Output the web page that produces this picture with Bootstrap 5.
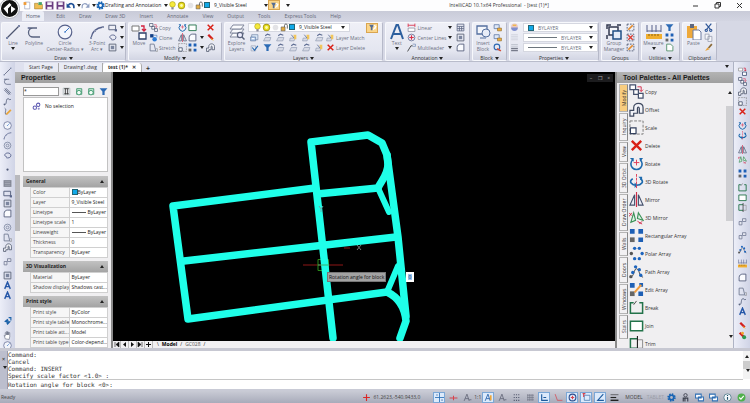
<!DOCTYPE html>
<html lang="en">
<head>
<meta charset="utf-8">
<meta name="viewport" content="width=device-width, initial-scale=1">
<title>IntelliCAD 10.1x64 Professional - [test (1)*]</title>
<link href="https://cdn.jsdelivr.net/npm/bootstrap@5.3.0/dist/css/bootstrap.min.css" rel="stylesheet">
<style>
:root{--ui:"Open Sans","Noto Sans",sans-serif;--ink:#222;--dim:#6d7182;}
body{font:5px/6px var(--ui);color:var(--ink);background:#dfe1ec;overflow:hidden}
button,select,input{font:inherit;color:inherit;border:0;background:none;padding:0;margin:0;line-height:inherit}
button{display:inline-flex;align-items:center;justify-content:center;white-space:nowrap}
select{appearance:none;min-width:0;flex:1;outline:0}
svg{display:block;flex:none}
.g{width:9px;height:9px}
.g-lg{width:16px;height:16px}
.items .g-lg{width:15px;height:15px}
.caret::after{content:"";border:2px solid transparent;border-top:3px solid #222;border-bottom:0;margin-left:2px;flex:none}

.titlebar{height:11px;background:#fdfdfe;padding-left:22px}
.caption{color:#333}
.qb{width:11px}
.winbtns button{width:22px}
.applogo{position:absolute;left:-1px;top:-2px;width:21px;height:21px;z-index:3}
.hot{background:#fbd588;border:1px solid #d9a550;width:12px;height:10px}
.swatch{width:6px;height:6px;background:#12a9e8;border:1px solid #267;flex:none}

.ribbon-tabs{height:10px;background:linear-gradient(#c9cbd8,#d3d5e2);padding-left:22px}
.ribbon-tabs a{color:#646878;text-decoration:none;padding:1px 7px 0;line-height:9px}
.ribbon-tabs a.active{background:#eceef6;color:#555a70;border-radius:2px 2px 0 0;padding:1px 4px 0;margin-right:5px}

.ribbon{height:41px;background:#d6d8e5;padding:1px 1px 0;border-bottom:1px solid #b9bccb}
.panel{background:linear-gradient(#eff0f7,#e4e6f0 75%,#d2d5e3);border:1px solid #f7f8fc;border-right-color:#b6b9c9;border-radius:2px;margin-right:2px;color:var(--dim)}
.panel .body-area{height:31px}
.panel h2{font:5px/8px var(--ui);text-align:center;color:#333;margin:0}
.panel h2.drop::after{content:"";display:inline-block;border:2px solid transparent;border-top:3px solid #222;border-bottom:0;margin-left:2px}
.bigbtn{flex-direction:column;justify-content:flex-start;height:31px;padding-top:1px;line-height:6px;white-space:normal;color:var(--dim)}
.bigbtn .caret{display:flex;height:3px;margin-top:1px}
.bigbtn .caret::after{margin-left:0}
.stack{display:grid;grid-auto-rows:10px;align-items:center}
.stack button{justify-content:flex-start;height:10px;gap:1px}
.field{background:#fff;border:1px solid #d5d7e0;height:9px}

.docs{height:10px;background:#dfe1ee;padding-left:9px;color:#333}
.docs a{color:#333;text-decoration:none;padding:0 5px;line-height:9px;border-right:1px solid #aaa;background:#e9ebf4}
.docs a.active{background:#fff;font-weight:700;border-radius:3px 3px 0 0}
.docs .newtab{font-size:7px;font-weight:700}
.toolcol{display:flex;flex-direction:column;background:linear-gradient(90deg,#eceef8,#d0d4e6);flex:none;overflow:hidden}
.toolcol button{height:10px;width:100%;flex:none}
.toolcol .sep{margin-top:4px}
.toolcol .sep2{margin-top:16px}
.toolcol-l{width:15px;padding-top:5px}
.toolcol-r{width:17px;padding-top:5px;border-left:1px solid #aeb3c4}

.dockhead{background:linear-gradient(#b4b4b4,#9f9f9f);height:11px;padding-left:6px;font:bold 7px/11px "Liberation Sans",Arial,sans-serif;color:#1c1c1c;white-space:nowrap}
.dock{background:#f0eff1;flex:none}
.props{width:98px;border-right:2px solid #8b8b8b}
.props-body{flex:1;min-width:0;padding:4px 3px 0}
.props-rail{width:5px;flex:none;padding-top:92px}
.props-rail .thumb{display:block;height:56px}
.findbox{width:36px;border-color:#999}
.tree{background:#fff;border:1px solid #c2c2c2;height:75px;margin-top:1px}
.thumb{background:#b9b9bd}
.gridhead{background:linear-gradient(#c2c2c2,#a4a4a4);height:11px;padding:0 4px 0 3px;font:bold 5px/11px var(--ui);width:100%;justify-content:space-between}
.gridhead:not(:first-child){margin-top:3px}
.up{border:2px solid transparent;border-bottom:3px solid #222;border-top:0}
.pgrid{width:calc(100% - 7px);margin-left:7px;table-layout:fixed;border-collapse:collapse;background:#fff}
.pgrid th,.pgrid td{height:10px;border:1px solid #d0d0d0;padding:0 1px 0 2px;line-height:7px;font-weight:400;white-space:nowrap;overflow:hidden}
.pgrid th{background:#f6f6f6;color:#444}
.dash{display:inline-block;width:14px;border-top:1px solid #555;vertical-align:middle;margin-right:2px}

.view{background:#000;overflow:hidden}
.view>svg.scene{position:absolute;left:0;top:0}
.mdi{background:#1c1c1e;color:#aaa;position:absolute;right:2px;top:2px;width:26px;height:8px}
.prompt-tip{position:absolute;left:214px;top:200px;height:10px;background:#a2a2a2;border:1px solid #777;color:#111;line-height:8px;padding:0 1px;white-space:nowrap}
.prompt-val{position:absolute;left:293px;top:200px;width:8px;height:10px;background:#9cc5ee;border:2px solid #fff;color:#036;text-align:center}
.layouts{height:7px;background:#f1f0f2}
.layouts button{width:8px;height:7px;border-right:1px solid #bbb}
.layouts a{color:#555;text-decoration:none;line-height:7px;padding:0 3px}
.layouts a.active{color:#000;font-weight:700}

.palettes{width:118px;border-left:2px solid #8b8b8b}
.vtabs{width:9px;padding-top:1px;margin-left:2px}
.vtabs button{writing-mode:vertical-rl;transform:rotate(180deg);width:9px;border:1px solid #b5b5b5;border-left-color:#888;background:#f2f1f3;color:#333;margin-bottom:1px}
.vtabs button.active{background:#f8cd7f}
.items button{height:18px;justify-content:flex-start;padding-left:1px;gap:1px;color:#333;flex:none}
.sbar{width:7px}
.palettes .thumb{height:115px;background:#cfcfd2}

.command{background:#fff;border-top:3px solid #c7c8d2;border-bottom:2px solid #c9cbd6;font:6px/7px "DejaVu Sans Mono","Liberation Mono",monospace;color:#333}
.command .grip{width:8px;background:#bcbecd;border-right:1px solid #989bab}
.command pre{font:inherit;margin:0;height:28px;overflow:hidden}
.command input{height:10px;border-top:1px solid #c6c6c6;width:100%;outline:0}
.command .sbar{height:28px;background:#f3f3f3}
.command .thumb{height:8px;background:#cdcdcd}
.status{height:12px;background:linear-gradient(#c9cbd5,#a8abba);color:#444;padding:0 2px 0 1px}
.status button{width:14px;height:12px}
.status .on{background:#dceafb;border:1px solid #7ba7d6;height:11px;width:12px;margin:0 1px}
</style>
<script src="https://cdn.jsdelivr.net/npm/bootstrap@5.3.0/dist/js/bootstrap.bundle.min.js"></script>
</head>
<body class="vh-100 d-flex flex-column position-relative">
<svg class="d-none" aria-hidden="true"><defs>
<symbol id="line" viewBox="0 0 16 16"><path d="M2 14 14 2" stroke="#4d5570" stroke-width="1.3"/><path d="M1 13h2v2H1zM13 1h2v2h-2z" fill="#7b86a8"/></symbol>
<symbol id="pline" viewBox="0 0 16 16"><path d="M14 13H7a4.500 4.500 0 0 1 0-9L2 4M7 4h4" fill="none" stroke="#5a6480" stroke-width="1.3"/><circle cx="2.500" cy="4" r="1" fill="#7b86a8"/></symbol>
<symbol id="circ" viewBox="0 0 16 16"><circle cx="8" cy="8" r="6.800" fill="#f3f5fb" stroke="#56618a" stroke-width="1.200"/><path d="M8 8l4-4M7 8h2" stroke="#3b78c8"/></symbol>
<symbol id="arc" viewBox="0 0 16 16"><path d="M2 14C3 8 7 4 14 3" fill="none" stroke="#56618a" stroke-width="1.300"/><path d="M1 13h2v2H1zM5 6h2v2H5zM13 2h2v2h-2z" fill="#8a93b0"/></symbol>
<symbol id="rect" viewBox="0 0 16 16"><path d="M1.500 4h12v8h-12z" fill="none" stroke="#4f5a78" stroke-width="1.600"/><path d="M12 11h4v4h-4z" fill="#59658a"/></symbol>
<symbol id="rev" viewBox="0 0 16 16"><path d="M3 8c0-6 11-6 11 0 0 4-5 5-8 4M3 8l4 3" fill="none" stroke="#56618a" stroke-width="1.600"/></symbol>
<symbol id="hatch" viewBox="0 0 16 16"><path d="M1 2h14v12H1z" fill="#818593"/><path d="M3 5h10M3 8h10M3 11h10" stroke="#b9bdc9"/></symbol>
<symbol id="boxed" viewBox="0 0 16 16"><path d="M2 2h12v12H2z" fill="none" stroke="#5d6578" stroke-width="1.600"/><path d="M5 5h6v6H5z" fill="#7c869f"/></symbol>
<symbol id="move" viewBox="0 0 16 16"><path d="M1 2h7v5H1z" fill="#fff" stroke="#777" /><path d="M8 9h7v6H8z" fill="#fff" stroke="#2d3f68" stroke-width="1.300"/><path d="M10 2h3v5M11 5l2 2 2-2" fill="none" stroke="#d21f3c" stroke-width="1.300"/></symbol>
<symbol id="copy" viewBox="0 0 16 16"><path d="M1 1h6v5H1zM5 6h5v5H5zM10 10h5v5h-5z" fill="#fff" stroke="#44506c" stroke-width="1.300"/><path d="M9 3h4v5M11 6l2 2 2-2" fill="none" stroke="#d5304c"/></symbol>
<symbol id="clone" viewBox="0 0 16 16"><path d="M2 2h6v6H2z" fill="#123f86"/><circle cx="10" cy="11" r="4" fill="#2b7bd6"/><path d="M8 4h6v4" fill="none" stroke="#2b66ad"/></symbol>
<symbol id="stretch" viewBox="0 0 16 16"><path d="M2 2h7l3 12H2z" fill="none" stroke="#66708a" stroke-width="1.400"/><path d="M12 10h3v5h-3" fill="none" stroke="#888"/></symbol>
<symbol id="rot" viewBox="0 0 16 16"><path d="M4 4a6 6 0 1 0 8 0" fill="none" stroke="#1c69ad" stroke-width="1.700"/><path d="M11 2h4l-3 4zM1 2h4v4z" fill="#1c69ad"/><path d="M8 4v6M5 7h6" stroke="#dd3b55"/></symbol>
<symbol id="rot3" viewBox="0 0 16 16"><path d="M4 5C-1 8 3 12 8 12s9-4 4-7" fill="none" stroke="#1c69ad" stroke-width="1.800"/><path d="M9 12l-3-3v6zM10 3h4v4z" fill="#1c69ad"/><path d="M8 0v16" stroke="#dd3b55" stroke-dasharray="3 1"/></symbol>
<symbol id="mirror" viewBox="0 0 16 16"><path d="M6 3v11H1zM10 3v11h5z" fill="#e8eaf3" stroke="#44506c" stroke-width="1.200"/><path d="M8 0v16" stroke="#cf2c49" stroke-width="1.200"/></symbol>
<symbol id="mir3" viewBox="0 0 16 16"><path d="M5 3 2 13l5-2zM10 3l5 8-6-2z" fill="#e3f2e7" stroke="#3a9157" stroke-width="1.200"/><path d="M0 3l3 3M11 15l3-3M0 7l3-4M9 12l5 3" stroke="#cf2c49"/></symbol>
<symbol id="scale" viewBox="0 0 16 16"><path d="M1 1h14v14H1z" fill="none" stroke="#777" stroke-dasharray="3 1.500"/><path d="M1.500 8.500h6v6h-6z" fill="#fff" stroke="#33405e" stroke-width="1.300"/></symbol>
<symbol id="offset" viewBox="0 0 16 16"><path d="M1 15V9h4V6c0-6 10-6 10 0v6H11V7c0-2-2-2-2 0v5H5v3z" fill="#f2f3f8" stroke="#3f4960" stroke-width="1.300"/></symbol>
<symbol id="del" viewBox="0 0 16 16"><path d="M3 3l10 10M13 3 3 13" stroke="#d92016" stroke-width="2.600"/></symbol>
<symbol id="array" viewBox="0 0 16 16"><path d="M1 1h5v5H1zM10 1h5v5h-5zM10 10h5v5h-5z" fill="#1d5fb5"/><path d="M1 10h5v5H1z" fill="#666"/></symbol>
<symbol id="polar" viewBox="0 0 16 16"><g fill="#1d64bd"><circle cx="6" cy="2.500" r="1.800"/><circle cx="11" cy="2.500" r="1.800"/><circle cx="14" cy="8" r="1.800"/><circle cx="11" cy="13.500" r="1.800"/><circle cx="6" cy="13.500" r="1.800"/></g><circle cx="2.500" cy="8" r="1.800" fill="#555"/></symbol>
<symbol id="patha" viewBox="0 0 16 16"><path d="M1 14c5 0 4-9 7-9s3 9 7 9" fill="none" stroke="#444"/><g fill="#1d64bd"><circle cx="4" cy="9" r="1.800"/><circle cx="7" cy="3" r="1.800"/><circle cx="11" cy="6" r="1.800"/><circle cx="12.500" cy="12" r="1.800"/></g><circle cx="2" cy="13.500" r="1.800" fill="#555"/></symbol>
<symbol id="edita" viewBox="0 0 16 16"><path d="M1 1h5v5H1zM11 1h4v4h-4zM10 10h5v5h-5z" fill="#1d5fb5"/><path d="M1 10h5v5H1z" fill="#666"/><path d="M6 11l7-8" stroke="#f09b3c" stroke-width="2.200"/></symbol>
<symbol id="break" viewBox="0 0 16 16"><path d="M5 3H1.500v11h13V3H11" fill="none" stroke="#22734a" stroke-width="1.600"/><path d="M5 5l3-4" stroke="#444"/></symbol>
<symbol id="join" viewBox="0 0 16 16"><path d="M1.500 3.500h13v10h-13z" fill="#fff" stroke="#22734a" stroke-width="1.600"/></symbol>
<symbol id="trim" viewBox="0 0 16 16"><path d="M9 3H1.500v10H9" fill="none" stroke="#22734a" stroke-width="1.600"/><path d="M9 4h5.500v9H9" fill="none" stroke="#888"/><path d="M9 0v16" stroke="#222" stroke-width="1.200"/></symbol>
<symbol id="chamf" viewBox="0 0 16 16"><path d="M2 14V8c0-4 3-6 6-6h6v12z" fill="#fafbfe" stroke="#4c5775" stroke-width="1.500"/></symbol>
<symbol id="brush" viewBox="0 0 16 16"><path d="M4 3l8 8" stroke="#d31f1f" stroke-width="4"/><path d="M10 9l4 5-5-3z" fill="#f0b32c"/></symbol>
<symbol id="brush2" viewBox="0 0 16 16"><path d="M3 3l7 7" stroke="#d31f1f" stroke-width="4"/><circle cx="11" cy="11" r="3.500" fill="#2c9a52"/><circle cx="8" cy="4" r="2.500" fill="#f0a52c"/></symbol>
<symbol id="cubes" viewBox="0 0 16 16"><path d="M2 8h5v6H2zM8 3h6v5H8z" fill="#e4e6ef" stroke="#68718c" stroke-width="1.300"/></symbol>
<symbol id="layers" viewBox="0 0 16 16"><g fill="#fafbfd" stroke="#80879c"><path d="M4 9h11l-3 4H1z"/><path d="M4 5h11l-3 4H1z"/><path d="M4 1h11l-3 4H1z"/></g><circle cx="11" cy="11" r="2.600" fill="#eef" stroke="#5a637c" stroke-width="1.200"/><path d="M13 13l2.500 2.500" stroke="#5a637c" stroke-width="1.500"/></symbol>
<symbol id="lay1" viewBox="0 0 16 16"><path d="M3 3h11v9H3z" fill="#dbe8f8" stroke="#5a7096"/><path d="M1 7h9v7H1z" fill="#a9c3e6" stroke="#5a7096"/><path d="M3 10h5" stroke="#fff" stroke-width="2"/></symbol>
<symbol id="lay2" viewBox="0 0 16 16"><path d="M4 8h10l-2 6H1z" fill="#d7dae5" stroke="#8490aa"/><path d="M4 5 8 2l5 2" fill="none" stroke="#5f6e93" stroke-width="2"/></symbol>
<symbol id="lay3" viewBox="0 0 16 16"><path d="M2 9h9l-2 5H1z" fill="#d7dae5" stroke="#8490aa"/><path d="M8 3h5v8H9z" fill="#f1c65c"/><path d="M4 3l5 6" stroke="#607099" stroke-width="1.500"/></symbol>
<symbol id="lay4" viewBox="0 0 16 16"><path d="M2 5h8v9H2z" fill="#e4e8f1" stroke="#8b94ab"/><path d="M4 8l4 5 6-8" fill="none" stroke="#2769b1" stroke-width="2"/></symbol>
<symbol id="bulb" viewBox="0 0 16 16"><circle cx="8" cy="6" r="5" fill="#f5e93c" stroke="#a79a1b"/><path d="M6 11h4v4H6z" fill="#889"/></symbol>
<symbol id="sun" viewBox="0 0 16 16"><circle cx="8" cy="8" r="6.500" fill="#a79a1b"/><circle cx="8" cy="8" r="5" fill="#e6dc1c"/><circle cx="8" cy="8" r="2.500" fill="#fffbb0"/></symbol>
<symbol id="snow" viewBox="0 0 16 16"><circle cx="8" cy="8" r="5" fill="#e3e3e6"/></symbol>
<symbol id="lock" viewBox="0 0 16 16"><path d="M2 7h7v7H2z" fill="#e3ad42" stroke="#555"/><path d="M8 7V4c0-3 5-3 5 0v6" fill="none" stroke="#555" stroke-width="1.500"/></symbol>
<symbol id="lyrhot" viewBox="0 0 16 16"><path d="M2 3h9l-3 5v5H5V8z" fill="#566d94"/><path d="M9 12l5-6M10 4l4 2-2 5" fill="none" stroke="#fff" stroke-width="2"/></symbol>
<symbol id="text" viewBox="0 0 16 16"><path d="M2 15 7.500 1h1.500l5 14M4.500 10h7" fill="none" stroke="#2c5f9e" stroke-width="2"/></symbol>
<symbol id="atext" viewBox="0 0 16 16"><path d="M3 14 8 2l5 12M5 10h6" fill="none" stroke="#2557a8" stroke-width="2.500"/></symbol>
<symbol id="linear" viewBox="0 0 16 16"><path d="M2 9h12v6H2z" fill="#fff" stroke="#667"/><path d="M2 1v6M14 1v6M2 4h12" stroke="#d8304a" stroke-width="1.500"/></symbol>
<symbol id="center" viewBox="0 0 16 16"><circle cx="8" cy="8" r="6" fill="none" stroke="#56618a" stroke-width="1.300"/><path d="M8 4v8M4 8h8" stroke="#d8304a" stroke-width="2"/></symbol>
<symbol id="leader" viewBox="0 0 16 16"><path d="M1 15 7 5h3" fill="none" stroke="#333" stroke-width="1.500"/><path d="M10 2h5v4h-5" fill="none" stroke="#5876a8"/></symbol>
<symbol id="tbl" viewBox="0 0 16 16"><path d="M2 2h12v12H2zM2 6h12M6 6v8M10 6v8M2 10h12" fill="none" stroke="#5f6a86" stroke-width="1.500"/></symbol>
<symbol id="block" viewBox="0 0 16 16"><path d="M2 2h10v8H2z" fill="#f4f6fb" stroke="#5570a0" stroke-width="1.300"/><circle cx="11" cy="9" r="4" fill="#e8edf8" stroke="#5570a0"/><path d="M5 14h6" stroke="#5570a0"/></symbol>
<symbol id="blk2" viewBox="0 0 16 16"><path d="M2 3h9v7H2z" fill="#dfe8f8" stroke="#5570a0" stroke-width="1.300"/><path d="M8 9h7v5H8z" fill="#efb03e" stroke="#86642a"/></symbol>
<symbol id="blk3" viewBox="0 0 16 16"><circle cx="7" cy="7" r="5" fill="none" stroke="#2c66b0" stroke-width="2"/><path d="M7 10l7 4" stroke="#cf4e3a" stroke-width="3"/></symbol>
<symbol id="ball" viewBox="0 0 16 16"><circle cx="8" cy="7" r="6" fill="#e9c7c0"/><path d="M2 8h12a6 6 0 0 1-12 0" fill="#7f8fd0"/><path d="M5 4h6" stroke="#f2b632" stroke-width="2"/></symbol>
<symbol id="lines" viewBox="0 0 16 16"><path d="M2 3h12M2 7h12" stroke="#9a9eac"/><path d="M2 10h12M2 13.500h12" stroke="#777b8a" stroke-width="2"/></symbol>
<symbol id="lines0" viewBox="0 0 16 16"><path d="M2 3h12M2 6h12M2 9h12M2 12h12" stroke="#c2c4d0"/></symbol>
<symbol id="group" viewBox="0 0 16 16"><path d="M1 5V1h4M11 1h4M1 11v4" fill="none" stroke="#333a50" stroke-width="1.500"/><path d="M3 3h9v8H3z" fill="#f6f7fb" stroke="#333a50" stroke-width="1.500"/><path d="M7 7h8v8H7z" fill="#e5edf9" stroke="#1f4f85" stroke-width="1.500"/></symbol>
<symbol id="grp" viewBox="0 0 16 16"><path d="M2 2h12v12H2z" fill="none" stroke="#44506c" stroke-width="1.500" stroke-dasharray="3 2"/><path d="M4 12l8-8" stroke="#e58c2d" stroke-width="3"/></symbol>
<symbol id="grp2" viewBox="0 0 16 16"><path d="M2 2h12v12H2z" fill="none" stroke="#44506c" stroke-width="1.500" stroke-dasharray="3 2"/><path d="M4 4l8 8M12 4l-8 8" stroke="#db3b30" stroke-width="2.500"/></symbol>
<symbol id="measure" viewBox="0 0 16 16"><path d="M1 1v7M6 1v7M10 1v7M15 1v7M1 7h14" stroke="#56618a" fill="none"/><path d="M0 10h16v5H0z" fill="#f0ae2f"/><path d="M3 10v2M6 10v2M9 10v2M12 10v2" stroke="#8d6212"/></symbol>
<symbol id="filter" viewBox="0 0 16 16"><path d="M1 2h14l-5 6v6H6V8z" fill="#2d6bb5"/></symbol>
<symbol id="page" viewBox="0 0 16 16"><path d="M3 2h7l4 4v8H3z" fill="#fff" stroke="#498a63" stroke-width="1.500"/></symbol>
<symbol id="paste" viewBox="0 0 16 16"><path d="M1 2h10v12H1z" fill="#eea93b"/><path d="M4 0h4v4H4z" fill="#5e6880"/><path d="M7 6h6l2 2v8H7z" fill="#fff" stroke="#6d7ba0"/></symbol>
<symbol id="cut" viewBox="0 0 16 16"><path d="M3 1l8 10M13 1 5 11" stroke="#2b5496" stroke-width="2"/><circle cx="4" cy="13" r="2" fill="none" stroke="#2b5496" stroke-width="2"/><circle cx="12" cy="13" r="2" fill="none" stroke="#2b5496" stroke-width="2"/></symbol>
<symbol id="cpy" viewBox="0 0 16 16"><path d="M2 2h7v9H2zM7 6h7v9H7z" fill="#f5f6fa" stroke="#9097aa" stroke-width="1.300"/></symbol>
<symbol id="pbrush" viewBox="0 0 16 16"><path d="M2 14l4-6 4 3z" fill="#e9a33b"/><path d="M8 9l6-7" stroke="#8b6a38" stroke-width="3"/></symbol>
<symbol id="newf" viewBox="0 0 16 16"><path d="M3 2h9v12H3z" fill="#fff" stroke="#8591ac"/><path d="M1 2h5v5H1z" fill="#f09b34"/></symbol>
<symbol id="open" viewBox="0 0 16 16"><path d="M1 4h6l1 2h7v8H1z" fill="#efbe52" stroke="#a0792a"/><path d="M8 2h6v5H8z" fill="#45a46b"/></symbol>
<symbol id="save" viewBox="0 0 16 16"><path d="M1 1h14v14H1z" fill="#6a3d80"/><path d="M4 2h8v5H4zM4 10h8v5H4z" fill="#f3eef7"/></symbol>
<symbol id="undo" viewBox="0 0 16 16"><path d="M4 8c3-5 10-4 10 2v3" fill="none" stroke="#1d4f97" stroke-width="3"/><path d="M1 4v8h8z" fill="#1d4f97"/></symbol>
<symbol id="redo" viewBox="0 0 16 16"><path d="M12 8C9 3 2 4 2 10v3" fill="none" stroke="#8d9dc0" stroke-width="2"/><path d="M15 4v8H8z" fill="#8d9dc0"/></symbol>
<symbol id="gear" viewBox="0 0 16 16"><circle cx="8" cy="8" r="6" fill="none" stroke="#1764b4" stroke-width="3" stroke-dasharray="2.700 2"/><circle cx="8" cy="8" r="4" fill="none" stroke="#1764b4" stroke-width="3"/></symbol>
<symbol id="spl" viewBox="0 0 16 16"><path d="M2 14c6 0 2-11 7-11 3 0 2 4 5 1" fill="none" stroke="#5a6480" stroke-width="1.600"/><circle cx="2.500" cy="13" r="1.500" fill="#5a6480"/></symbol>
<symbol id="dline" viewBox="0 0 16 16"><path d="M2 5l9 9M5 2l9 9M3 3l10 10" stroke="#5a6480" stroke-width="1.500"/></symbol>
<symbol id="pencil" viewBox="0 0 16 16"><path d="M3 2c5 3-2 8 3 12" fill="none" stroke="#5a6480" stroke-width="1.500"/><path d="M6 13l8-8" stroke="#eaa53a" stroke-width="3"/></symbol>
<symbol id="dot" viewBox="0 0 16 16"><circle cx="8" cy="8" r="2" fill="#4c5775"/></symbol>
<symbol id="donut" viewBox="0 0 16 16"><circle cx="8" cy="8" r="6" fill="none" stroke="#7a849e" stroke-width="1.400"/><circle cx="8" cy="8" r="2.500" fill="none" stroke="#7a849e" stroke-width="1.400"/></symbol>
<symbol id="sync" viewBox="0 0 16 16"><path d="M2 8 8 3l2 3-3 4zM14 8l-6 6-2-3 4-4z" fill="#1b62a8"/><path d="M10 1h4v5" fill="none" stroke="#1b62a8" stroke-width="2"/></symbol>
<symbol id="hand" viewBox="0 0 16 16"><path d="M4 14 2 8l2 1V3h2v4-6h2v6-5h2v5-4h2v7l-1 5z" fill="#fff" stroke="#555e76"/></symbol>
<symbol id="sel" viewBox="0 0 16 16"><path d="M2 2h12v12H2z" fill="#e6e8ea" stroke="#9aa"/><path d="M4 3h8M6 3v10M10 3v10M4 12h8" stroke="#333" stroke-width="1.500"/></symbol>
<symbol id="selg" viewBox="0 0 16 16"><path d="M3 3h9v10H3z" fill="#cdeedd" stroke="#3a9167" stroke-width="1.500"/><circle cx="7" cy="10" r="4" fill="#f2fbf6" stroke="#2d8f61" stroke-width="1.500"/></symbol>
<symbol id="node" viewBox="0 0 16 16"><circle cx="5" cy="10" r="3" fill="none" stroke="#5a56b0" stroke-width="1.800"/><circle cx="11" cy="5" r="3" fill="none" stroke="#5a56b0" stroke-width="1.800"/><path d="M10 12h4M12 10v4" stroke="#5a56b0"/></symbol>
<symbol id="plus" viewBox="0 0 16 16"><path d="M8 2v12M2 8h12" stroke="#db2626" stroke-width="2"/></symbol>
<symbol id="grid" viewBox="0 0 16 16"><path d="M3 2v12M6 2v12M9 2v12M12 2v12M2 4h12M2 8h12M2 12h12" stroke="#6c7080"/></symbol>
<symbol id="snap" viewBox="0 0 16 16"><path d="M3 3h10M3 8h10M3 13h10" stroke="#555b70" stroke-width="2" stroke-dasharray="2 2"/></symbol>
<symbol id="cross" viewBox="0 0 16 16"><path d="M8 0v16M0 8h16" stroke="#2a6fb5" stroke-width="1.500"/><path d="M2 2h3v3H2zM11 11h3v3h-3z" fill="#8aa9cf"/></symbol>
<symbol id="rline" viewBox="0 0 16 16"><path d="M1 9h14M8 5v8" stroke="#d7434d" stroke-width="1.800"/></symbol>
<symbol id="gA" viewBox="0 0 16 16"><path d="M2 14 7 2l4 12M4 10h6M11 12h4" fill="none" stroke="#5f6475" stroke-width="1.400"/></symbol>
<symbol id="gAon" viewBox="0 0 16 16"><path d="M2 14 7 2l4 12M4 10h6" fill="none" stroke="#2c66b0" stroke-width="1.600"/><path d="M12 4v9" stroke="#eaa53a" stroke-width="3"/></symbol>
<symbol id="ortho" viewBox="0 0 16 16"><path d="M3 2v11h11M6 8h5" fill="none" stroke="#1e5a9c" stroke-width="2"/></symbol>
<symbol id="polarT" viewBox="0 0 16 16"><path d="M2 2l4 11h9" fill="none" stroke="#d7434d" stroke-width="1.300"/></symbol>
<symbol id="osnap" viewBox="0 0 16 16"><circle cx="8" cy="8" r="6" fill="none" stroke="#2c4d8c" stroke-width="2"/><path d="M8 5v6M5 8h6" stroke="#d7434d" stroke-width="2"/></symbol>
<symbol id="esnap" viewBox="0 0 16 16"><path d="M4 4h10v9H4z" fill="none" stroke="#5480b5" stroke-width="1.500"/><path d="M1 1h5M3 1v6" stroke="#d7434d" stroke-width="2"/></symbol>
<symbol id="ang" viewBox="0 0 16 16"><path d="M13 2 3 13h11" fill="none" stroke="#205c9e" stroke-width="2"/></symbol>
<symbol id="lwt" viewBox="0 0 16 16"><path d="M1 3h14" stroke="#222"/><path d="M1 8h10" stroke="#222" stroke-width="2"/><path d="M1 13h14" stroke="#222" stroke-width="2.500"/></symbol>
<symbol id="man" viewBox="0 0 16 16"><circle cx="8" cy="4" r="3" fill="none" stroke="#3b3f4c" stroke-width="1.500"/><path d="M4 15V9h8v6M7 9v6" fill="none" stroke="#3b3f4c" stroke-width="2"/></symbol>
<symbol id="wins" viewBox="0 0 16 16"><path d="M1 2h10v7H1zM6 7h9v7H6z" fill="#fff" stroke="#2e6fb4" stroke-width="1.800"/></symbol>
<symbol id="info" viewBox="0 0 16 16"><circle cx="8" cy="8" r="6.500" fill="#f4f8fb" stroke="#3f6f7f" stroke-width="1.300"/><path d="M8 7v5M8 3.500v2" stroke="#20506b" stroke-width="2"/></symbol>
<symbol id="ok" viewBox="0 0 16 16"><circle cx="8" cy="8" r="7" fill="#4fb04b"/><path d="M4 8l3 3 5-6" fill="none" stroke="#fff" stroke-width="2"/></symbol>
</defs></svg>

<svg class="applogo" viewBox="0 0 21 21" role="img" aria-label="IntelliCAD"><circle cx="10.500" cy="10.500" r="10" fill="#fff" stroke="#b3b5bf"/><circle cx="10.500" cy="10.500" r="8.500" fill="#111"/><path d="M4.500 10.500 10.500 5l2 2-3.500 3.500v5.500zM12 8l4.500 3-4.500 4z" fill="#fff"/></svg>

<header class="titlebar d-flex align-items-center">
  <nav class="d-flex align-items-center" id="quick" aria-label="Quick access"></nav>
  <label class="d-flex align-items-center caret" style="width:72px"><svg class="g"><use href="#gear"/></svg><select aria-label="Workspace"><option>Drafting and Annotation</option></select></label>
  <label class="d-flex align-items-center caret" style="width:100px"><svg class="g"><use href="#bulb"/></svg><svg class="g"><use href="#sun"/></svg><svg class="g"><use href="#snow"/></svg><svg class="g"><use href="#lock"/></svg><span class="swatch me-1"></span><select aria-label="Current layer"><option>9_Visible Steel</option></select></label>
  <button class="hot" aria-label="Layer tools"><svg class="g"><use href="#lyrhot"/></svg></button>
  <button class="caret ms-1" aria-label="Customize"></button>
  <span class="caption flex-fill text-center ps-4">IntelliCAD 10.1x64 Professional &nbsp;- [test (1)*]</span>
  <div class="winbtns d-flex"><button aria-label="Minimize"><svg class="g" viewBox="0 0 9 9"><path d="M2 5h5" stroke="#333"/></svg></button><button aria-label="Restore"><svg class="g" viewBox="0 0 9 9"><path d="M2 3h4v4H2zM3.500 3V1.500h4v4H6" fill="none" stroke="#333"/></svg></button><button aria-label="Close"><svg class="g" viewBox="0 0 9 9"><path d="M2 2l5 5M7 2 2 7" stroke="#333"/></svg></button></div>
</header>

<nav class="ribbon-tabs d-flex" aria-label="Ribbon">
  <a href="#" class="active">Home</a><a href="#">Edit</a><a href="#">Draw</a><a href="#">Draw 3D</a><a href="#">Insert</a><a href="#">Annotate</a><a href="#">View</a><a href="#">Output</a><a href="#">Tools</a><a href="#">Express Tools</a><a href="#">Help</a>
</nav>

<section class="ribbon d-flex" id="ribbon"></section>

<div class="d-flex flex-fill overflow-hidden">
  <aside class="toolcol toolcol-l" id="ltools" aria-label="Draw tools"></aside>
  <div class="d-flex flex-column flex-fill overflow-hidden">
    <nav class="docs d-flex align-items-end" aria-label="Documents"><a href="#">Start Page</a><a href="#">Drawing1.dwg</a><a href="#" class="active">test (1)* &nbsp; ✕</a><button class="newtab px-1" aria-label="New drawing">+</button><button class="caret ms-auto me-1 align-self-center" aria-label="Document list"></button></nav>
    <div class="d-flex flex-fill overflow-hidden">

      <aside class="dock props overflow-hidden" aria-label="Properties">
        <div class="dockhead">Properties</div>
        <div class="d-flex">
          <div class="props-rail"><span class="thumb"></span></div>
          <div class="props-body">
            <div class="d-flex align-items-center justify-content-between"><input class="field findbox" aria-label="Filter" value="*"><button aria-label="Quick select"><svg class="g"><use href="#sel"/></svg></button><button aria-label="Select objects"><svg class="g"><use href="#selg"/></svg></button><button aria-label="Toggle pick"><svg class="g"><use href="#selg"/></svg></button><button aria-label="Filter list"><svg class="g"><use href="#filter"/></svg></button></div>
            <div class="tree"><div class="d-flex align-items-center ps-2 pt-1"><svg class="g"><use href="#node"/></svg><span class="ms-1">No selection</span></div></div>
            <div id="pg" class="mt-1"></div>
          </div>
        </div>
      </aside>

      <main class="d-flex flex-column flex-fill overflow-hidden">
        <div class="view flex-fill position-relative">
          <svg class="scene" width="502" height="270" viewBox="113 71 502 270">
            <path d="M303 264h40M344 247h6" stroke="#8e1616"/>
            <path d="M318 258.500h10.500v11H318zM322 214v10" fill="none" stroke="#2a8a1a"/>
            <path d="M357 244l4 5M361 244l-4 5" fill="none" stroke="#777"/>
            <g fill="none" stroke="#1fffe9" stroke-width="7.500" stroke-linecap="round" stroke-linejoin="round">
              <path d="M333 337 311 141 368 134 382 142 387 154 388 163 C388 174 381 180 378 187L317 193"/>
              <path d="M315 187 173 205 188 318 387 291C400 297 405 309 406 320L400 337"/>
              <path d="M184 260 396 236M387 154 398 236 406 315"/>
              <path d="M378 187 389 211M398 265 387 291" stroke-width="6"/>
            </g>
            <path d="M319 205l2 3 2-3M321 208v3" fill="none" stroke="#6aa"/>
            <path d="M318 264h10" stroke="#3fae6a"/>
          </svg>
          <div class="mdi d-flex justify-content-around align-items-center"><button aria-label="Minimize drawing">–</button><button aria-label="Restore drawing">❐</button><button aria-label="Close drawing">×</button></div>
          <label for="ang-in" class="prompt-tip">Rotation angle for block</label>
          <input id="ang-in" class="prompt-val" value="0">
        </div>
        <nav class="layouts d-flex" aria-label="Layouts"><button aria-label="First"><svg class="g" viewBox="0 0 9 9"><path d="M3 2v5M7 2 4 4.500 7 7z" fill="#111" stroke="#111" stroke-width=".6"/></svg></button><button aria-label="Previous"><svg class="g" viewBox="0 0 9 9"><path d="M6 2 3 4.500 6 7z" fill="#111"/></svg></button><button aria-label="Next"><svg class="g" viewBox="0 0 9 9"><path d="M3 2l3 2.500L3 7z" fill="#111"/></svg></button><button aria-label="Last"><svg class="g" viewBox="0 0 9 9"><path d="M6 2v5M2 2l3 2.500L2 7z" fill="#111" stroke="#111" stroke-width=".6"/></svg></button><button aria-label="Add layout"><svg class="g" viewBox="0 0 9 9"><path d="M4.500 2v5M2 4.500h5" stroke="#111"/></svg></button><span class="ps-1">\</span><a href="#" class="active">Model</a><span>/</span><a href="#">GC028</a><span>/</span></nav>
      </main>

      <aside class="dock palettes d-flex flex-column overflow-hidden" aria-label="Tool palettes">
        <div class="dockhead">Tool Palettes - All Palettes</div>
        <div class="d-flex flex-fill overflow-hidden">
          <div class="vtabs d-flex flex-column" id="vtabs"></div>
          <div class="items d-flex flex-column flex-fill overflow-hidden" id="items"></div>
          <div class="sbar d-flex flex-column align-items-center py-1"><span class="up my-1"></span><span class="thumb w-100 mt-2"></span><span class="caret mt-auto"></span></div>
        </div>
      </aside>
    </div>
  </div>
  <aside class="toolcol toolcol-r" id="rtools" aria-label="Modify tools"></aside>
</div>

<section class="command d-flex" aria-label="Command line">
  <div class="grip d-flex flex-column align-items-center pt-1 gap-1"><button aria-label="Close command bar">×</button><button class="caret" aria-label="History"></button></div>
  <div class="flex-fill"><pre>Command:
Cancel
Command: INSERT
Specify scale factor &lt;1.0&gt; :</pre><input class="d-block" aria-label="Command" value="Rotation angle for block &lt;0&gt;:"></div>
  <div class="sbar d-flex flex-column align-items-center justify-content-between pt-1"><span class="up"></span><span class="thumb w-100"></span><span class="caret"></span></div>
</section>
<footer class="status d-flex align-items-center" id="status"><span class="flex-fill">Ready</span></footer>

<script>
const $ = id => document.getElementById(id);
const ic = (n, c = 'g') => `<svg class="${c}" aria-hidden="true"><use href="#${n}"/></svg>`;
const btn = (n, label = '', cls = '') => `<button class="${cls}" aria-label="${label || n}">${ic(n)}${label}</button>`;
const big = (n, label, w, drop) => `<button class="bigbtn" style="width:${w}px">${ic(n, 'g-lg')}<span>${label}</span>${drop ? '<span class="caret"></span>' : ''}</button>`;
const stack = (w, ...rows) => `<div class="stack" style="width:${w}px">${rows.join('')}</div>`;
const panel = (title, w, body, drop = true) => `<div class="panel" style="width:${w}px"><div class="body-area d-flex">${body}</div><h2 class="${drop ? 'drop' : ''}">${title}</h2></div>`;
const c = 'caret';

$('quick').innerHTML = ['newf','open','save','save'].map(n => btn(n, '', 'qb')).join('') + btn('undo', '', c) + btn('redo', '', c);

const lrow = a => `<div class="d-flex">${a.map(n => `<button aria-label="${n}" style="width:13px;justify-content:center">${ic(n)}</button>`).join('')}`;
const prop = (n, v, sw) => `<div class="d-flex align-items-center gap-1">${ic(n)}<label class="field d-flex align-items-center flex-fill caret pe-1 ps-1">${sw ? '<span class="swatch me-1"></span>' : '<span class="flex-fill border-top border-secondary me-1"></span>'}<select aria-label="${n}" style="${sw ? '' : 'flex:none;width:26px'}"><option>${v}</option></select></label></div>`;

$('ribbon').innerHTML =
  panel('Draw', 125, big('line','Line',22,1) + big('pline','Polyline',20) + big('circ','Circle<br>Center-Radius&nbsp;▾',42) + big('arc','3-Point<br>Arc&nbsp;▾',22) + stack(16, btn('rect','',c), btn('rev','',c), btn('boxed','',c)))
+ panel('Modify', 94, big('move','Move',20) + stack(29, btn('copy','Copy'), btn('clone','Clone'), btn('stretch','Stretch')) + stack(10, btn('rot'), btn('mirror'), btn('scale')) + stack(18, btn('join'), btn('chamf','',c), btn('array','',c)) + stack(10, btn('del'), btn('brush'), btn('offset')))
+ panel('Layers', 159, big('layers','Explore<br>Layers',23) + `<div class="stack flex-fill"><div class="d-flex justify-content-between"><label class="field d-flex align-items-center caret px-1" style="width:102px">${['bulb','sun','snow','lock'].map(n => ic(n)).join('')}<span class="swatch me-1"></span><select class="text-dark" aria-label="Layer"><option>9_Visible Steel</option></select></label><button class="hot justify-content-center me-1" aria-label="Layer filter">${ic('lyrhot')}</button></div>`
   + lrow(['lay1','lay2','lay2','lay3','lay3','lay2']) + btn('lay3','Layer Match') + '</div>' + lrow(['lay4','filter','lay2','lay2','lay2','lay3']) + btn('del','Layer Delete') + '</div></div>')
+ panel('Annotation', 85, big('text','Text',22,1) + `<div class="stack flex-fill">${[['linear','Linear'],['center','Center Lines'],['leader','Multileader']].map(([n, t]) => `<div class="d-flex align-items-center justify-content-between caret">${btn(n, t)}</div>`).join('')}</div>` + stack(17, btn('tbl','','ps-1'), btn('boxed','','ps-1'), btn('chamf','','ps-1')))
+ panel('Block', 35, big('block','Insert<br>Block',20) + stack(11, btn('blk2'), btn('blk2'), btn('blk3')))
+ panel('Properties', 90, `<div class="stack w-100">${prop('ball','BYLAYER',1)}${prop('lines0','BYLAYER')}${prop('lines','BYLAYER')}</div>`)
+ panel('Groups', 38, big('group','Group<br>Manager',24) + stack(10, btn('grp'), btn('grp2'), btn('grp')), false)
+ panel('Utilities', 39, big('measure','Measure',23,1) + stack(11, btn('filter'), btn('array'), btn('page')))
+ panel('Clipboard', 35, big('paste','Paste',21) + stack(10, btn('cut'), btn('cpy'), btn('pbrush')), false);

const col = s => s.split(' ').map(t => btn(t.replace(/^\++/, ''), '', t.startsWith('++') ? 'sep2' : t.startsWith('+') ? 'sep' : '')).join('');
$('ltools').innerHTML = col('line pline dline spl pencil +circ arc donut rev +dot +hatch rect boxed chamf +donut stretch offset +cubes +boxed atext atext ++sync +hand circ');
$('rtools').innerHTML = col('move copy offset scale del +rot rot3 +mirror mir3 +array +break join trim +cubes +cubes +patha +measure +chamf +stretch spl atext +brush brush2');

const D = '<span class="dash"></span>';
const groups = {
  'General': [['Color','<span class="swatch d-inline-block align-middle"></span>ByLayer'],['Layer','9_Visible Steel'],['Linetype',D+'ByLayer'],['Linetype scale','1'],['Lineweight',D+'ByLayer'],['Thickness','0'],['Transparency','ByLayer']],
  '3D Visualization': [['Material','ByLayer'],['Shadow display','Shadows cast...']],
  'Print style': [['Print style','ByColor'],['Print style table','Monochrome...'],['Print table att...','Model'],['Print table type','Color-depend...']]
};
$('pg').innerHTML = Object.entries(groups).map(([h, r]) => `<button class="gridhead">${h}<span class="up"></span></button><table class="pgrid">${r.map(([k, v]) => `<tr><th scope="row">${k}</th><td>${v}</td></tr>`).join('')}</table>`).join('');

$('vtabs').innerHTML = [['Modify',28],['Inquiry',28],['View',20],['3D Orbit',30],['Draw Order',37],['Walls',24],['Doors',26],['Windows',30],['Stairs',24]].map(([t, h], i) => `<button class="${i ? '' : 'active'}" style="height:${h}px">${t}</button>`).join('');
$('items').innerHTML = [['copy','Copy'],['offset','Offset'],['scale','Scale'],['del','Delete'],['rot','Rotate'],['rot3','3D Rotate'],['mirror','Mirror'],['mir3','3D Mirror'],['array','Rectangular Array'],['polar','Polar Array'],['patha','Path Array'],['edita','Edit Array'],['break','Break'],['join','Join'],['trim','Trim']].map(([n, t]) => `<button>${ic(n, 'g-lg')}${t}</button>`).join('');

$('status').insertAdjacentHTML('beforeend', btn('plus') + '<span class="me-2 pe-1">61.2623,-540.9433,0</span>'
  + [['cross',1],['rline'],['gA']].map(([n, o]) => btn(n, '', o ? 'on' : '')).join('') + '<span>1:1</span>'
  + [['gAon',1],['gA'],['snap'],['grid'],['ortho',1],['polarT'],['osnap',1],['esnap',1],['ang',1],['lwt']].map(([n, o]) => btn(n, '', o ? 'on' : '')).join('')
  + '<span class="mx-1">MODEL</span><span class="opacity-25">TABLET</span>' + ['gear','man','wins','wins','info','ok'].map(n => btn(n)).join(''));
</script>
</body>
</html>
